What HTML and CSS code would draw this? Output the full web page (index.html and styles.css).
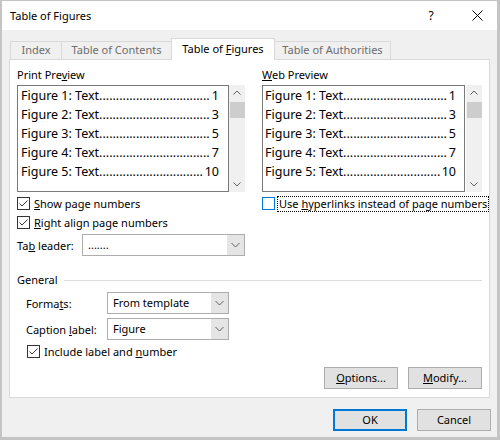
FILE: index.html
```html
<!DOCTYPE html>
<html>
<head>
<meta charset="utf-8">
<link rel="stylesheet" href="styles.css">
</head>
<body>
<div class="window">
  <div class="titlebar">
    <span class="title">Table of Figures</span>
    <span class="help">?</span>
    <span class="close"><svg width="11" height="11" viewBox="0 0 11 11"><path d="M0.5 0.5 L10.5 10.5 M10.5 0.5 L0.5 10.5" stroke="#000" stroke-width="1" fill="none"/></svg></span>
  </div>
  <div class="body">
    <div class="tabs">
      <div class="tab t1">Index</div>
      <div class="tab t2">Table of Contents</div>
      <div class="tab t3 active">Table of <u>F</u>igures</div>
      <div class="tab t4">Table of Authorities</div>
    </div>
    <div class="panel">
      <div class="top">
        <div class="col left">
          <div class="label">Print Pre<u>v</u>iew</div>
          <div class="pv-wrap">
            <div class="preview pl">
              <div class="row"><span>Figure 1: Text.................................</span><span>1</span></div>
              <div class="row"><span>Figure 2: Text.................................</span><span>3</span></div>
              <div class="row"><span>Figure 3: Text.................................</span><span>5</span></div>
              <div class="row"><span>Figure 4: Text.................................</span><span>7</span></div>
              <div class="row"><span>Figure 5: Text...............................</span><span>10</span></div>
            </div>
            <div class="sb">
              <svg class="arr" width="16" height="16" viewBox="0 0 16 16"><path d="M4.5 9.5 L8 6 L11.5 9.5" stroke="#606060" fill="none"/></svg>
              <div class="thumb"></div>
              <svg class="arr down" width="16" height="16" viewBox="0 0 16 16"><path d="M4.5 6.5 L8 10 L11.5 6.5" stroke="#606060" fill="none"/></svg>
            </div>
          </div>
          <div class="check first"><span class="box"><svg width="11" height="11" viewBox="0 0 11 11"><path d="M1.5 5.5 L4 8 L9.5 2.5" stroke="#333" fill="none"/></svg></span><span><u>S</u>how page numbers</span></div>
          <div class="check"><span class="box"><svg width="11" height="11" viewBox="0 0 11 11"><path d="M1.5 5.5 L4 8 L9.5 2.5" stroke="#333" fill="none"/></svg></span><span><u>R</u>ight align page numbers</span></div>
          <div class="field">
            <span class="flabel">Ta<u>b</u> leader:</span>
            <div class="combo tl"><span class="ctext">.......</span><span class="carrow"><svg width="17" height="20" viewBox="0 0 17 20"><path d="M4.5 8 L8.5 12 L12.5 8" stroke="#606060" fill="none"/></svg></span></div>
          </div>
        </div>
        <div class="sep"></div>
        <div class="col right">
          <div class="label"><u>W</u>eb Preview</div>
          <div class="pv-wrap">
            <div class="preview pr">
              <div class="row"><span>Figure 1: Text...............................</span><span>1</span></div>
              <div class="row"><span>Figure 2: Text...............................</span><span>3</span></div>
              <div class="row"><span>Figure 3: Text...............................</span><span>5</span></div>
              <div class="row"><span>Figure 4: Text...............................</span><span>7</span></div>
              <div class="row"><span>Figure 5: Text.............................</span><span>10</span></div>
            </div>
            <div class="sb gap">
              <svg class="arr" width="16" height="16" viewBox="0 0 16 16"><path d="M4.5 9.5 L8 6 L11.5 9.5" stroke="#606060" fill="none"/></svg>
              <div class="thumb"></div>
              <svg class="arr down" width="16" height="16" viewBox="0 0 16 16"><path d="M4.5 6.5 L8 10 L11.5 6.5" stroke="#606060" fill="none"/></svg>
            </div>
          </div>
          <div class="check first"><span class="box blue"></span><span class="focus">Use <u>h</u>yperlinks instead of page numbers</span></div>
        </div>
      </div>
      <div class="general"><span>General</span><span class="gline"></span></div>
      <div class="frow first"><span class="glabel">Forma<u>t</u>s:</span><div class="combo gc"><span class="ctext">From template</span><span class="carrow"><svg width="17" height="20" viewBox="0 0 17 20"><path d="M4.5 8 L8.5 12 L12.5 8" stroke="#606060" fill="none"/></svg></span></div></div>
      <div class="frow"><span class="glabel">Caption <u>l</u>abel:</span><div class="combo gc"><span class="ctext">Figure</span><span class="carrow"><svg width="17" height="20" viewBox="0 0 17 20"><path d="M4.5 8 L8.5 12 L12.5 8" stroke="#606060" fill="none"/></svg></span></div></div>
      <div class="check incl"><span class="box"><svg width="11" height="11" viewBox="0 0 11 11"><path d="M1.5 5.5 L4 8 L9.5 2.5" stroke="#333" fill="none"/></svg></span><span>Include label and <u>n</u>umber</span></div>
      <div class="btnrow">
        <div class="btn"><u>O</u>ptions...</div>
        <div class="btn"><u>M</u>odify...</div>
      </div>
    </div>
    <div class="footer">
      <div class="btn ok">OK</div>
      <div class="btn">Cancel</div>
    </div>
  </div>
</div>
</body>
</html>
```
FILE: styles.css
```css
* { box-sizing: border-box; }
html, body { margin: 0; padding: 0; }
body {
  width: 500px; height: 440px; overflow: hidden;
  font-family: "Noto Sans", "Open Sans", sans-serif;
  font-size: 11px; color: #000;
}
u { text-decoration: underline; text-underline-offset: 1px; }
.window {
  width: 500px; height: 440px;
  border-style: solid; border-color: #c4c4c4;
  border-width: 1px 3px 3px 2px;
  background: #f0f0f0;
  display: flex; flex-direction: column;
}
.titlebar {
  height: 29px; flex: none; background: #fff;
  display: flex; align-items: center; padding-left: 8px;
}
.title { flex: 1; font-size: 11px; }
.help { width: 20px; text-align: center; margin-right: 26px; font-size: 12px; }
.close { width: 20px; margin-right: 10px; display: flex; justify-content: center; }
.close svg { display: block; }
.body { flex: 1; padding: 8px 6px 0 0; }
.tabs { display: flex; align-items: flex-end; height: 21px; margin-left: 8px; }
.tab {
  height: 18px; border: 1px solid #d9d9d9; border-bottom: none;
  margin-right: -1px; color: #6d6d6d; text-align: center;
  line-height: 16px; white-space: nowrap;
}
.t1 { width: 52px; }
.t2 { width: 111px; }
.t3 { width: 104px; }
.t4 { width: 117px; }
.tab.active {
  height: 22px; background: #fff; color: #000;
  margin-bottom: -1px; position: relative; z-index: 1; line-height: 19px;
}
.panel {
  margin-left: 7px; width: 481px; height: 339px;
  background: #fff; border: 1px solid #d9d9d9;
  padding: 8px 7px 0 7px;
  display: flex; flex-direction: column;
}
.top { display: flex; align-items: flex-start; }
.col.left { width: 228px; }
.col.right { width: 220px; }
.sep { width: 1px; height: 203px; background: #a8a8a8; margin: -2px 8px 0 9px; }
.label { height: 14px; line-height: 14px; margin-bottom: 3px; white-space: nowrap; }
.pv-wrap { display: flex; }
.preview {
  height: 107px; border: 1px solid #7a7a7a; background: #fff;
}
.preview.pl { width: 212px; padding: 0 9px 0 3px; }
.preview.pr { width: 203px; padding: 0 8px 0 2px; }
.row {
  display: flex; justify-content: space-between; height: 19px; line-height: 19px;
  font-size: 12.5px; white-space: nowrap;
}
.sb {
  width: 16px; height: 107px; background: #f0f0f0;
  display: flex; flex-direction: column; align-items: center;
}
.sb.gap { margin-left: 1px; }
.arr { display: block; flex: none; }
.arr.down { margin-top: auto; }
.thumb { width: 15px; height: 16px; background: #cdcdcd; margin-top: 1px; }
.check { display: flex; align-items: center; height: 19px; white-space: nowrap; }
.check.first { margin-top: 2px; }
.box {
  width: 13px; height: 13px; border: 1px solid #333; background: #fff;
  margin-right: 4px; flex: none; display: block;
}
.box svg { display: block; }
.box.blue { border-color: #0078d7; }
.focus { border: 1px dotted #000; line-height: 14px; padding: 0 1px; margin-left: -2px; }
.field { display: flex; align-items: center; margin-top: 2px; }
.flabel { width: 65px; white-space: nowrap; }
.combo {
  display: flex; height: 22px; border: 1px solid #adadad; background: #fff;
}
.combo.tl { width: 163px; }
.combo.gc { width: 122px; }
.ctext { flex: 1; padding-left: 5px; line-height: 20px; white-space: nowrap; overflow: hidden; }
.carrow { width: 17px; background: #e5e5e5; flex: none; }
.carrow svg { display: block; }
.general { display: flex; align-items: center; margin-top: 4px; height: 14px; line-height: 14px; }
.gline { flex: 1; height: 1px; background: #dcdcdc; margin-left: 6px; }
.frow { display: flex; align-items: center; padding-left: 9px; margin-top: 4px; }
.frow.first { margin-top: 5px; }
.glabel { width: 81px; white-space: nowrap; }
.check.incl { padding-left: 10px; margin-top: 2px; }
.btnrow { display: flex; justify-content: flex-end; gap: 10px; margin-top: 6px; }
.btn {
  width: 74px; height: 22px; background: #e1e1e1; border: 1px solid #adadad;
  text-align: center; line-height: 20px; white-space: nowrap;
}
.footer { display: flex; justify-content: flex-end; gap: 10px; margin-top: 11px; }
.btn.ok { border: 2px solid #0078d7; line-height: 18px; }
```
